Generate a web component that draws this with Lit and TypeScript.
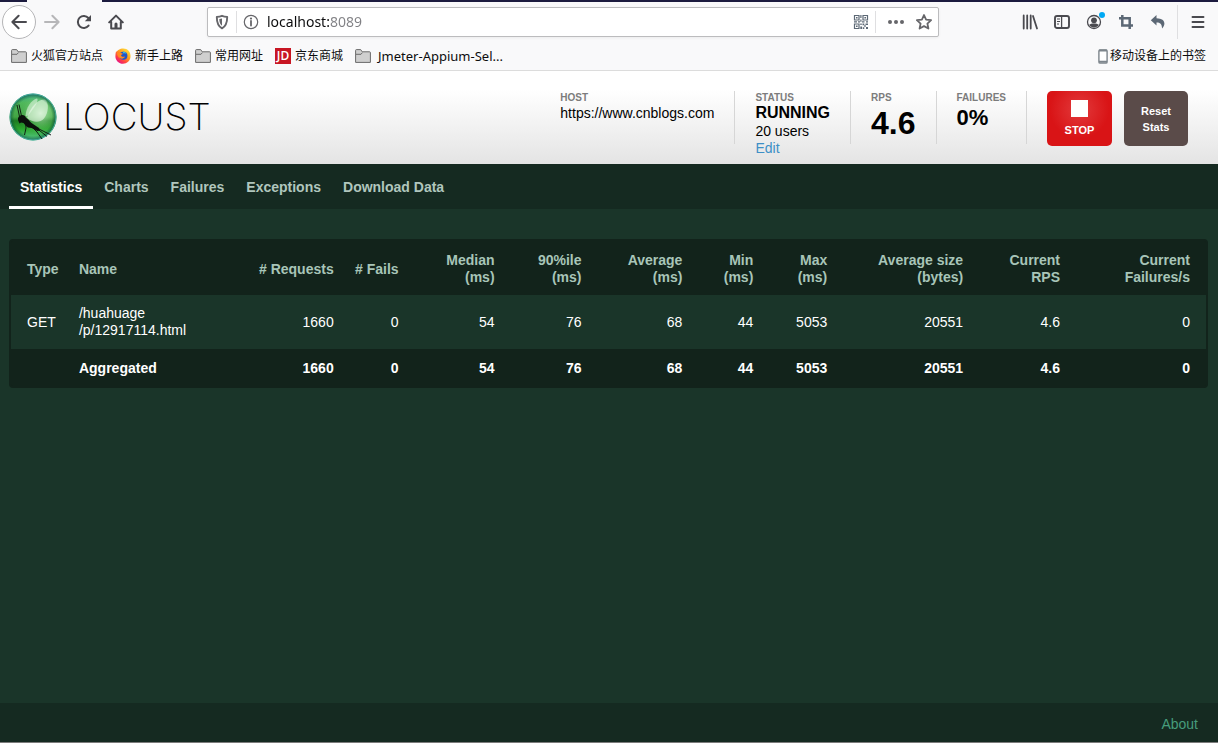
import { LitElement, html, svg, css, TemplateResult } from "lit";
import { customElement, state } from "lit/decorators.js";
import { classMap } from "lit/directives/class-map.js";

interface Column {
  title: string;
  weight: number;
  text?: boolean;
}

const COLUMNS: Column[] = [
  { title: "Type", weight: 58, text: true },
  { title: "Name", weight: 175, text: true },
  { title: "# Requests", weight: 100 },
  { title: "# Fails", weight: 65 },
  { title: "Median (ms)", weight: 96 },
  { title: "90%ile (ms)", weight: 87 },
  { title: "Average (ms)", weight: 101 },
  { title: "Min (ms)", weight: 71 },
  { title: "Max (ms)", weight: 74 },
  { title: "Average size (bytes)", weight: 136 },
  { title: "Current RPS", weight: 97 },
  { title: "Current Failures/s", weight: 136 },
];
const TOTAL_WEIGHT = COLUMNS.reduce((sum, c) => sum + c.weight, 0);

const VALUES = ["1660", "0", "54", "76", "68", "44", "5053", "20551", "4.6", "0"];

const TABS = ["Statistics", "Charts", "Failures", "Exceptions", "Download Data"];

const icon = (body: unknown) =>
  html`<svg class="icon" viewBox="0 0 16 16" width="16" height="16" aria-hidden="true">${body}</svg>`;

const ICONS: Record<string, TemplateResult> = {
  back: icon(svg`<path d="M15 8H1.6M7.6 1.8L1.4 8l6.2 6.2" fill="none" stroke="currentColor" stroke-width="2" stroke-linecap="round" stroke-linejoin="round"/>`),
  forward: icon(svg`<path d="M1 8h13.4M8.4 1.8L14.6 8l-6.2 6.2" fill="none" stroke="currentColor" stroke-width="2" stroke-linecap="round" stroke-linejoin="round"/>`),
  reload: icon(svg`<path d="M12.6 11.6A6 6 0 1 1 12.4 4" fill="none" stroke="currentColor" stroke-width="2" stroke-linecap="round"/><path d="M15 1v6.2H8.8z" fill="currentColor"/>`),
  home: icon(svg`<path d="M1.2 8.4L8 1.6l6.8 6.8M3.2 8v6.4h9.600V8" fill="none" stroke="currentColor" stroke-width="2" stroke-linecap="round" stroke-linejoin="round"/><path d="M6.500 14.500V10a1.500 1.500 0 0 1 3 0v4.500z" fill="currentColor"/>`),
  shield: icon(svg`<path d="M8 1.800c2 .8 3.600 1 5.200 1.100 0 5-.6 8.900-5.200 11.400C3.400 11.800 2.800 7.900 2.800 2.900 4.400 2.800 6 2.600 8 1.800z" fill="none" stroke="currentColor" stroke-width="1.900" stroke-linejoin="round"/><path d="M8 4.400v7.300c-2-1.500-2.600-3.700-2.700-6.800z" fill="currentColor"/>`),
  info: icon(svg`<circle cx="8" cy="8" r="6.700" fill="none" stroke="currentColor" stroke-width="1.200"/><path d="M8 7v4.500" stroke="currentColor" stroke-width="1.800" stroke-linecap="round"/><circle cx="8" cy="4.600" r="1.100" fill="currentColor"/>`),
  qr: icon(svg`<path d="M1.500 1.500h4.500v4.500H1.500zM10 1.500h4.500v4.500H10zM1.500 10h4.500v4.500H1.500z" fill="none" stroke="currentColor" stroke-width="1.200"/><path d="M3 3h1.600v1.600H3zM11.400 3H13v1.600h-1.600zM3 11.400h1.600V13H3zM7.300 1h1.200v3H7.300zM7.300 5.500h1.200v2.300H7.300zM1 7.300h3v1.200H1zM5 7.300h2v1.200H5zM9 7.300h2.500v1.200H9zM13 7.300h2v1.200h-2zM7.300 9.500h1.400V11H7.300zM9.500 9.500h1.800v1.800H9.500zM12.500 9.500H15v1.500h-2.500zM11.200 11.200h1.600v1.600h-1.600zM7.300 12.500h1.800V15H7.300zM9.800 13.200h1.500V15H9.800zM13 13h2v2h-2z" fill="currentColor"/>`),
  more: icon(svg`<circle cx="2" cy="8" r="2" fill="currentColor"/><circle cx="8" cy="8" r="2" fill="currentColor"/><circle cx="14" cy="8" r="2" fill="currentColor"/>`),
  star: icon(svg`<path d="M8 1l2.100 4.650 5 .55-3.700 3.400 1 4.900L8 12.100l-4.400 2.400 1-4.900L.9 6.200l5-.55z" fill="none" stroke="currentColor" stroke-width="1.800" stroke-linejoin="round"/>`),
  library: icon(svg`<path d="M1.700 1.500v13M5.200 1.500v13M8.700 1.500v13M11 2l4 12.500" fill="none" stroke="currentColor" stroke-width="1.800" stroke-linecap="round"/>`),
  sidebar: icon(svg`<rect x="1" y="2" width="14" height="12" rx="2" fill="none" stroke="currentColor" stroke-width="1.900"/><path d="M7.600 2v12" stroke="currentColor" stroke-width="1.300"/><path d="M3 5h3M3 7.500h3M3 10h2" stroke="currentColor" stroke-width="1.200"/>`),
  account: icon(svg`<circle cx="8" cy="8" r="6.500" fill="none" stroke="currentColor" stroke-width="1.300"/><circle cx="8" cy="6.300" r="2.900" fill="currentColor"/><path d="M3.200 10.800C4.400 9.600 5.800 9.400 8 9.400s3.600.2 4.800 1.400C11.800 12.600 10 13.400 8 13.400s-3.800-.8-4.800-2.600z" fill="currentColor"/>`),
  crop: icon(svg`<path d="M4.300 1v10.400H15M1 4.300h10.700V15" fill="none" stroke="currentColor" stroke-width="2.500"/>`),
  undo: icon(svg`<path d="M6.500 1L.8 6.300l5.700 5.200V8.400c3.300-.1 5.300.9 5.600 6.200 4.200-5 2.800-10.200-5.600-10.400z" fill="currentColor"/>`),
  menu: icon(svg`<path d="M2.500 3h11M2.500 8h11M2.500 13h11" stroke="currentColor" stroke-width="1.900" stroke-linecap="round"/>`),
  folder: icon(svg`<path d="M.6 14.400V2.400c0-.5.300-.8.700-.8h4.400l1.500 2.200h7.500c.4 0 .7.300.7.700v9.900z" fill="#cfcfcf" stroke="#6a6a6a"/><path d="M1 6.300h5l1.300-1.600" fill="none" stroke="#6a6a6a"/>`),
  firefox: icon(svg`<defs><linearGradient id="fx" x1=".85" y1=".1" x2=".2" y2=".95"><stop offset="0" stop-color="#ffde3a"/><stop offset=".4" stop-color="#ff9a1c"/><stop offset=".75" stop-color="#ff3b47"/><stop offset="1" stop-color="#e3128a"/></linearGradient></defs><path d="M1 3.500C1.600 4 2 3 3 2.300c1-.9 2.500-1.600 4-1.800 2.700-.4 5 .3 6.600 2.300C15 4.500 15.700 6.600 15.500 8.700 15.200 12.700 12 15.700 8 15.700S.4 12.500.4 8.400C.4 6.500.6 5 1 3.500z" fill="url(#fx)"/><circle cx="8.400" cy="7.700" r="4" fill="#1f55c8"/><path d="M8 3.300c2 .4 3 1.200 3.400 2.800C10.300 5 9.300 5.200 8 5.500z" fill="#35b7e8"/><path d="M2 4.500c1.400-.6 2.800-.3 4 .5l1.800.4c-.2 1-.9 1.200-1.800 1.600.2 1.700 1.700 2.200 4 1.500-.7 1.800-2.800 2.800-4.800 1.800C3 9.300 2 7 2 4.500z" fill="#ff8a1f"/>`),
  phone: html`<svg class="phone" viewBox="0 0 10 15" width="10" height="15" aria-hidden="true"><rect x=".9" y=".9" width="8.200" height="13.200" rx="1.200" fill="#fff" stroke="#7d858c" stroke-width="1.400"/><path d="M1 1.600h8M1 12.800h8" stroke="#7d858c" stroke-width="2"/></svg>`,
};

const globe = html`<svg class="globe" viewBox="0 0 48 48" width="48" height="48" aria-hidden="true">
  <defs>
    <linearGradient id="ball" x1="0" y1="0" x2="0" y2="1">
      <stop offset="0" stop-color="#3fae98"/><stop offset=".2" stop-color="#4fb85a"/><stop offset=".5" stop-color="#43a544"/>
      <stop offset=".58" stop-color="#1c7a22"/><stop offset=".75" stop-color="#2aa52c"/><stop offset="1" stop-color="#59c98f"/>
    </linearGradient>
    <radialGradient id="glow" cx=".66" cy=".42" r=".5">
      <stop offset="0" stop-color="#c9efc9" stop-opacity=".85"/><stop offset=".55" stop-color="#7fd07f" stop-opacity=".4"/><stop offset="1" stop-color="#3aa54a" stop-opacity="0"/>
    </radialGradient>
    <radialGradient id="rim" cx=".5" cy=".5" r=".5">
      <stop offset=".82" stop-color="#0a4a2a" stop-opacity="0"/><stop offset="1" stop-color="#0b5a52" stop-opacity=".7"/>
    </radialGradient>
  </defs>
  <circle cx="24" cy="24" r="23.500" fill="url(#ball)"/>
  <circle cx="24" cy="24" r="23.500" fill="url(#glow)"/>
  <path d="M16.500 23C17 15 22 7 28 5.500c2 1-1 8-10 18z" fill="#e2f6e2" opacity=".6"/>
  <path d="M18 25C22 13 29 6 36 6.500c4.500 3 3.500 14-1 19-4 4.500-11 4.500-17-.5z" fill="#eefaec" opacity=".6"/>
  <circle cx="24" cy="24" r="23" fill="url(#rim)" stroke="#4aa9a0" stroke-width="1"/>
  <path d="M9 27c-.4-2.500 1-4.500 3.500-5 2.200-.4 4 .8 4.500 2.800 2 1.200 3.300 3.200 5.500 5.200l7.500 5 1 2.500-2.500.5-6-3-3.500-.5c-2-1-3-3-4.500-4.500l-2.500-.5-1.500 1z" fill="#0a0f0b"/>
  <path d="M10.500 23.500L8 12M12.500 23L10 11.500M16.500 29l.5 6-1.500 7M23 34l5 5 5 7M28 35.500l10 8M30 36l12 6" fill="none" stroke="#0a0f0b" stroke-width=".9"/>
</svg>`;

@customElement("browser-chrome")
export class BrowserChrome extends LitElement {
  static styles = css`
    :host {
      display: block;
      background: #f9f9fa;
      border-bottom: 1px solid #dcdcdc;
      color: #4a4a4f;
      font-family: "Noto Sans", "Noto Sans CJK SC", sans-serif;
    }
    svg { display: block; flex: none; }
    .tabs { display: flex; height: 2px; background: #1c1b3f; padding-left: 27px; }
    .tab { width: 75px; background: #f9f9fa; }
    .toolbar { display: flex; align-items: center; height: 40px; padding: 0 4px 0 2px; }
    button { display: flex; align-items: center; justify-content: center; width: 32px; height: 32px; flex: none; padding: 0; border: 0; background: none; color: inherit; position: relative; }
    .back { width: 34px; height: 34px; border: 1px solid #b5b5b7; border-radius: 50%; background: #fff; }
    .forward { color: #b6b6b8; }
    .slate { color: #5c6875; }
    .dot { position: absolute; right: 5px; top: 6px; width: 6px; height: 6px; border-radius: 50%; background: #00a9f4; }
    .rule { width: 1px; height: 34px; background: #dfdfe1; margin: 0 4px 0 3px; flex: none; }
    .address { display: flex; align-items: center; flex: 1; min-width: 0; height: 28px; margin: 0 75px; border: 1px solid #bcbcbe; border-radius: 2px; background: #fff; box-shadow: 0 1px 3px rgba(0, 0, 0, 0.06); color: #66666a; }
    .address button { width: 28px; height: 28px; }
    .address .more { margin-left: 6px; }
    .address .sep { width: 1px; height: 22px; background: #dfdfe1; flex: none; }
    .url {
      flex: 1; min-width: 0; height: 26px; padding: 0 0 2px; margin: 0 0 0 2px; border: 0; outline: 0;
      box-sizing: border-box;
      font: 14px/20px "Noto Sans", sans-serif;
      color: transparent; -webkit-background-clip: text; background-clip: text;
      background-image: linear-gradient(90deg, #0c0c0d 62px, #808084 62px);
    }
    .bookmarks { display: flex; align-items: center; gap: 12px; height: 28px; padding: 0 12px 0 11px; }
    .bookmarks a { display: flex; align-items: center; gap: 4px; color: #0c0c0d; text-decoration: none; font-size: 12px; line-height: 18px; white-space: nowrap; }
    .bookmarks .latin { gap: 7px; font-size: 13px; }
    .bookmarks .last { margin-left: auto; gap: 2px; }
    .jd { width: 16px; height: 16px; background: #c81623; color: #fff; font: 600 12px/16px "Open Sans", sans-serif; text-align: center; }
  `;

  render() {
    return html`
      <div class="tabs"><div class="tab"></div></div>
      <div class="toolbar">
        <button class="back" aria-label="Back">${ICONS.back}</button>
        <button class="forward" aria-label="Forward">${ICONS.forward}</button>
        <button aria-label="Reload">${ICONS.reload}</button>
        <button aria-label="Home">${ICONS.home}</button>
        <div class="address">
          <button aria-label="Tracking protection">${ICONS.shield}</button>
          <span class="sep"></span>
          <button aria-label="Site information">${ICONS.info}</button>
          <input class="url" type="text" aria-label="Address" value="localhost:8089" />
          <button class="slate" aria-label="QR code">${ICONS.qr}</button>
          <span class="sep"></span>
          <button class="more" aria-label="Page actions">${ICONS.more}</button>
          <button aria-label="Bookmark this page">${ICONS.star}</button>
        </div>
        <button aria-label="Library">${ICONS.library}</button>
        <button aria-label="Sidebars">${ICONS.sidebar}</button>
        <button aria-label="Account">${ICONS.account}<span class="dot"></span></button>
        <button class="slate" aria-label="Screenshot">${ICONS.crop}</button>
        <button class="slate" aria-label="Undo">${ICONS.undo}</button>
        <span class="rule"></span>
        <button aria-label="Menu">${ICONS.menu}</button>
      </div>
      <nav class="bookmarks">
        <a href="#">${ICONS.folder}火狐官方站点</a>
        <a href="#">${ICONS.firefox}新手上路</a>
        <a href="#">${ICONS.folder}常用网址</a>
        <a href="#"><span class="jd">JD</span>京东商城</a>
        <a class="latin" href="#">${ICONS.folder}Jmeter-Appium-Sel...</a>
        <a class="last" href="#">${ICONS.phone}移动设备上的书签</a>
      </nav>
    `;
  }
}

@customElement("stats-table")
export class StatsTable extends LitElement {
  static styles = css`
    :host { display: block; }
    .frame { border: 2px solid #12231b; border-radius: 4px; background: #12231b; }
    table { width: 100%; table-layout: fixed; border-collapse: collapse; font-size: 14px; line-height: 17px; color: #fff; }
    th, td { padding: 10px; text-align: right; vertical-align: middle; }
    th, .total td { padding-top: 11px; padding-bottom: 9px; font-weight: bold; }
    th:first-child, td:first-child { padding-left: 16px; padding-right: 8px; }
    th:last-child, td:last-child { padding-right: 16px; }
    th.text, td.text { text-align: left; }
    th { color: #a8c5b8; }
    .row { background: #1a3529; }
  `;

  private cells() {
    return VALUES.map((v) => html`<td>${v}</td>`);
  }

  render() {
    return html`
      <div class="frame">
        <table>
          <colgroup>
            ${COLUMNS.map((c) => html`<col style="width:${(c.weight / TOTAL_WEIGHT) * 100}%" />`)}
          </colgroup>
          <thead>
            <tr>${COLUMNS.map((c) => html`<th scope="col" class=${classMap({ text: !!c.text })}>${c.title}</th>`)}</tr>
          </thead>
          <tbody>
            <tr class="row">
              <td class="text">GET</td>
              <td class="text">/huahuage<br />/p/12917114.html</td>
              ${this.cells()}
            </tr>
            <tr class="total">
              <td class="text"></td>
              <td class="text">Aggregated</td>
              ${this.cells()}
            </tr>
          </tbody>
        </table>
      </div>
    `;
  }
}

@customElement("app-root")
export class AppRoot extends LitElement {
  @state() private active = "Statistics";

  static styles = css`
    :host {
      display: flex;
      flex-direction: column;
      min-height: 100vh;
      box-sizing: border-box;
      background: #1a3529;
      border-bottom: 1px solid #7c7c7c;
      font-family: "Liberation Sans", Arial, sans-serif;
      font-size: 14px;
      color: #000;
    }
    .top { display: flex; justify-content: space-between; height: 93px; padding: 0 30px 0 9px; background: linear-gradient(#fff, #fff 20%, #e4e4e4); }
    .brand { display: flex; align-items: center; gap: 6px; height: 92px; color: #000; text-decoration: none; font: 200 37px/48px Inter, sans-serif; }
    .globe { display: block; }
    .boxes { display: flex; align-items: flex-start; padding-top: 20px; }
    .box { height: 53px; padding: 0 20px; border-right: 1px solid #d6d6d6; }
    .label { font-size: 10px; line-height: 13px; font-weight: bold; color: #7c7c7c; }
    .value { line-height: 18px; }
    .box a { display: block; line-height: 17px; color: #3d8fc6; text-decoration: none; }
    .running { font-size: 16px; line-height: 18px; font-weight: bold; }
    .rps { font-size: 32px; line-height: 38px; font-weight: bold; }
    .ratio { font-size: 22px; line-height: 28px; font-weight: bold; }
    .actions { display: flex; gap: 12px; padding-left: 20px; }
    .action { width: 64px; height: 55px; padding: 0; border: 0; border-radius: 5px; color: #fff; font: bold 11px/16px "Liberation Sans", Arial, sans-serif; background: #5a4b49; }
    .stop { display: flex; flex-direction: column; align-items: center; justify-content: center; gap: 5px; width: 65px; background: radial-gradient(circle at 50% 33%, #e23a3c, #d91416 60%); }
    .square { width: 17px; height: 17px; background: #fff; }
    .tabs { display: flex; padding-left: 9px; background: #152a21; }
    .tab { height: 45px; padding: 4px 11px 0; border: 0; border-bottom: 3px solid transparent; background: none; color: #b0c6bd; font: bold 14px/17px "Liberation Sans", Arial, sans-serif; }
    .tab.active { color: #fff; border-bottom-color: #fff; }
    main { flex: 1; padding: 30px 10px 30px 9px; }
    footer { display: flex; justify-content: flex-end; padding: 13px 20px 9px; background: #152a21; line-height: 17px; }
    footer a { color: #469c7c; text-decoration: none; }
  `;

  render() {
    return html`
      <browser-chrome></browser-chrome>
      <header class="top">
        <a class="brand" href="#">${globe}<span>LOCUST</span></a>
        <div class="boxes">
          <div class="box">
            <div class="label">HOST</div>
            <div class="value">https://www.cnblogs.com</div>
          </div>
          <div class="box">
            <div class="label">STATUS</div>
            <div class="running">RUNNING</div>
            <div class="value">20 users</div>
            <a href="#">Edit</a>
          </div>
          <div class="box">
            <div class="label">RPS</div>
            <div class="rps">4.6</div>
          </div>
          <div class="box">
            <div class="label">FAILURES</div>
            <div class="ratio">0%</div>
          </div>
          <div class="actions">
            <button class="action stop"><span class="square"></span>STOP</button>
            <button class="action">Reset<br />Stats</button>
          </div>
        </div>
      </header>
      <nav class="tabs">
        ${TABS.map(
          (t) => html`<button class=${classMap({ tab: true, active: t === this.active })} @click=${() => (this.active = t)}>${t}</button>`
        )}
      </nav>
      <main><stats-table></stats-table></main>
      <footer><a href="#">About</a></footer>
    `;
  }
}
